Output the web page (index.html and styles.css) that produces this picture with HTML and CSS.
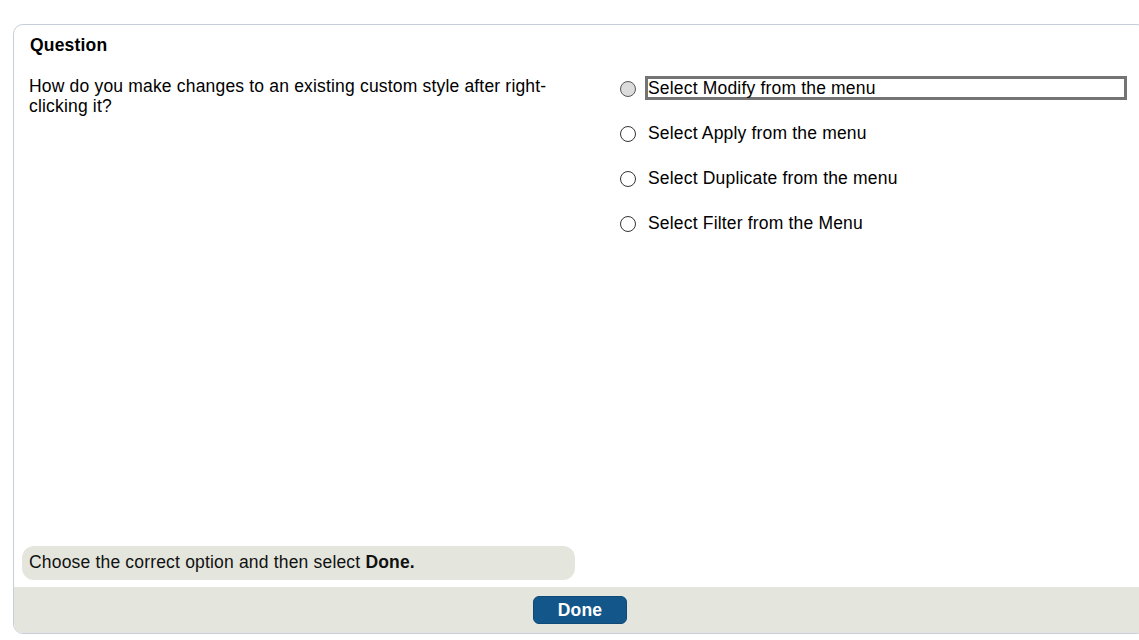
FILE: index.html
```html
<!DOCTYPE html>
<html lang="en">
<head>
<meta charset="utf-8">
<title>Question</title>
<link rel="stylesheet" href="styles.css">
</head>
<body>
<div class="panel">
  <div class="main">
    <div class="left">
      <h2 class="title">Question</h2>
      <p class="qtext">How do you make changes to an existing custom style after right-clicking it?</p>
      <div class="hint">Choose the correct option and then select <b>Done.</b></div>
    </div>
    <div class="right">
      <div class="opt focused"><span class="radio"></span><span class="lbl">Select Modify from the menu</span></div>
      <div class="opt"><span class="radio"></span><span class="lbl">Select Apply from the menu</span></div>
      <div class="opt"><span class="radio"></span><span class="lbl">Select Duplicate from the menu</span></div>
      <div class="opt"><span class="radio"></span><span class="lbl">Select Filter from the Menu</span></div>
    </div>
  </div>
  <div class="footer"><button class="done">Done</button></div>
</div>
</body>
</html>
```

FILE: styles.css
```css
html, body {
  margin: 0;
  padding: 0;
  background: #ffffff;
  overflow: hidden;
}
body {
  font-family: "Liberation Sans", Arial, sans-serif;
  font-size: 17.5px;
  letter-spacing: 0.18px;
  color: #000;
  width: 1139px;
  height: 640px;
}
.panel {
  box-sizing: border-box;
  margin: 24px 0 0 13px;
  width: 1134px;
  height: 610px;
  border: 1px solid #c6cfd9;
  border-radius: 10px;
  overflow: hidden;
  display: flex;
  flex-direction: column;
  background: #fff;
}
.main {
  flex: 1;
  display: grid;
  grid-template-columns: 553px 1fr;
  column-gap: 45px;
  padding: 11px 19px 7px 8px;
  min-height: 0;
}
.left {
  display: flex;
  flex-direction: column;
}
.title {
  margin: 0;
  padding-left: 8px;
  font-size: 17.5px;
  font-weight: bold;
  line-height: 18px;
}
.qtext {
  margin: 22px 0 0;
  padding: 0 14px 0 7px;
  line-height: 20px;
}
.hint {
  margin-top: auto;
  background: #e4e6dd;
  border-radius: 12px;
  padding: 5px 7px 7px;
  line-height: 22px;
  color: #111;
}
.right {
  display: flex;
  flex-direction: column;
  gap: 21px;
  padding-top: 40px;
}
.opt {
  display: flex;
  align-items: center;
  gap: 9px;
  height: 24px;
}
.radio {
  box-sizing: border-box;
  width: 16px;
  height: 16px;
  margin-top: 2px;
  border: 1.6px solid #333;
  border-radius: 50%;
  background: #fff;
  flex: none;
}
.focused .radio {
  background: #dcdcdc;
  border-color: #555;
}
.lbl {
  box-sizing: border-box;
  flex: 1;
  height: 24px;
  line-height: 18px;
  padding: 0;
  border: 3px solid transparent;
}
.focused .lbl {
  border-color: #747474;
}
.footer {
  flex: none;
  height: 46px;
  background: #e4e6dd;
  display: flex;
  align-items: center;
  justify-content: center;
  box-sizing: border-box;
}
.done {
  width: 94px;
  height: 28px;
  background: #13568a;
  border: 1px solid #0f4a78;
  border-radius: 6px;
  color: #fff;
  font-family: "Liberation Sans", Arial, sans-serif;
  font-size: 17.5px;
  letter-spacing: 0.2px;
  font-weight: bold;
  padding: 0;
  cursor: pointer;
}
```
